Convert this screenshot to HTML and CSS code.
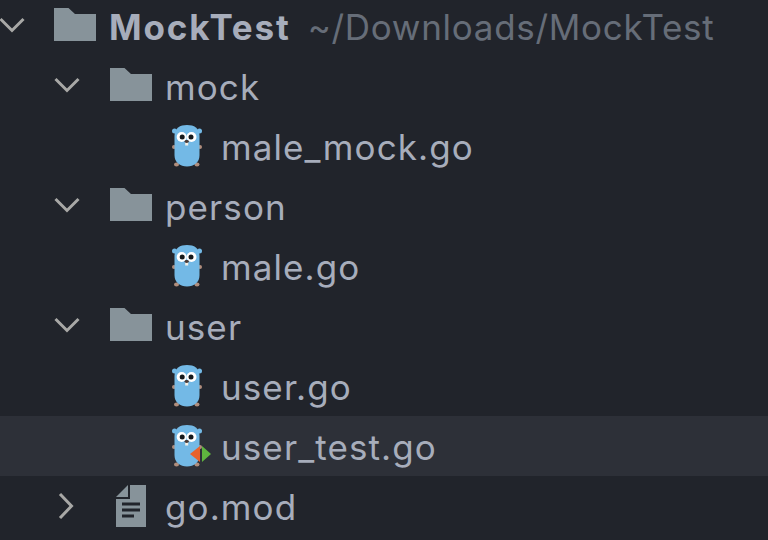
FILE: index.html
```html
<!DOCTYPE html>
<html lang="en">
<head>
  <meta charset="UTF-8">
  <title>Project tree</title>
  <link rel="stylesheet" href="styles.css">
</head>
<body>
<svg class="defs" width="0" height="0">
  <defs>
    <symbol id="folder" viewBox="0 0 42 33">
      <path d="M0 0H14.500L21 6H42V33H0Z" fill="#87939a"/>
    </symbol>
    <symbol id="chevron-down" viewBox="0 0 26 16">
      <path d="M1.500 2L13 13.500L24.500 2" fill="none" stroke="#a8a8a6" stroke-width="3"/>
    </symbol>
    <symbol id="chevron-right" viewBox="0 0 16 28">
      <path d="M2 2L13.500 14L2 26" fill="none" stroke="#a8a8a6" stroke-width="3"/>
    </symbol>
    <symbol id="gopher" viewBox="0 0 30 42">
      <ellipse cx="2" cy="22" rx="2" ry="2" fill="#b08d7c"/>
      <ellipse cx="28" cy="22" rx="2" ry="2" fill="#b08d7c"/>
      <ellipse cx="4.500" cy="39.500" rx="2.500" ry="2" fill="#b08d7c"/>
      <ellipse cx="25" cy="39.500" rx="2.500" ry="2" fill="#b08d7c"/>
      <circle cx="2.500" cy="6" r="2.500" fill="#73b9e6"/>
      <circle cx="27.500" cy="6" r="2.500" fill="#73b9e6"/>
      <path d="M2.500 11C2.500 3 8 0 15 0S27.500 3 27.500 11V30C27.500 37.500 22 41.500 15 41.500S2.500 37.500 2.500 30Z" fill="#73b9e6"/>
      <circle cx="9.700" cy="12" r="5" fill="#fff"/>
      <circle cx="19.500" cy="12" r="5" fill="#fff"/>
      <circle cx="10.200" cy="12" r="2.500" fill="#15191c"/>
      <circle cx="19" cy="12" r="2.500" fill="#15191c"/>
      <rect x="13.200" y="17" width="3" height="3.500" fill="#f4efe6"/>
      <ellipse cx="14.700" cy="16.500" rx="2.200" ry="1.400" fill="#4a3a36"/>
    </symbol>
    <symbol id="file" viewBox="0 0 30 42">
      <path d="M14 0H30V42H0V14H14Z" fill="#87939a"/>
      <path d="M12 0V12H0Z" fill="#87939a"/>
      <path d="M6 19H24M6 25H24M6 31H18" stroke="#21242b" stroke-width="3"/>
    </symbol>
  </defs>
</svg>

<ul class="tree">
  <li class="row level-0">
    <svg class="chevron"><use href="#chevron-down"/></svg>
    <svg class="icon folder"><use href="#folder"/></svg>
    <span class="name root">MockTest</span>
    <span class="path">~/Downloads/MockTest</span>
  </li>
  <li class="row level-1">
    <svg class="chevron"><use href="#chevron-down"/></svg>
    <svg class="icon folder"><use href="#folder"/></svg>
    <span class="name">mock</span>
  </li>
  <li class="row level-2">
    <span class="gopher-wrap"><svg class="gopher"><use href="#gopher"/></svg></span>
    <span class="name">male_mock.go</span>
  </li>
  <li class="row level-1">
    <svg class="chevron"><use href="#chevron-down"/></svg>
    <svg class="icon folder"><use href="#folder"/></svg>
    <span class="name">person</span>
  </li>
  <li class="row level-2">
    <span class="gopher-wrap"><svg class="gopher"><use href="#gopher"/></svg></span>
    <span class="name">male.go</span>
  </li>
  <li class="row level-1">
    <svg class="chevron"><use href="#chevron-down"/></svg>
    <svg class="icon folder"><use href="#folder"/></svg>
    <span class="name">user</span>
  </li>
  <li class="row level-2">
    <span class="gopher-wrap"><svg class="gopher"><use href="#gopher"/></svg></span>
    <span class="name">user.go</span>
  </li>
  <li class="row level-2 selected">
    <span class="gopher-wrap">
      <svg class="gopher"><use href="#gopher"/></svg>
      <svg class="run-badge" viewBox="0 0 21 16">
        <path d="M10 0V16L0 8Z" fill="#e8622c"/>
        <path d="M12 0L21 8L12 16Z" fill="#5fb53f"/>
      </svg>
    </span>
    <span class="name">user_test.go</span>
  </li>
  <li class="row level-1">
    <svg class="chevron closed"><use href="#chevron-right"/></svg>
    <svg class="icon file"><use href="#file"/></svg>
    <span class="name">go.mod</span>
  </li>
</ul>
</body>
</html>
```

FILE: styles.css
```css
:root {
  --background-color: #21242b;
  --selected-color: #2d3038;
  --text-color: #a7adbb;
  --path-color: #666d78;
}

html, body {
  height: 100%;
  overflow: hidden;
}

body {
  margin: 0;
  background-color: var(--background-color);
  color: var(--text-color);
  font-family: Inter, "Liberation Sans", sans-serif;
  font-size: 35px;
  letter-spacing: 1.100px;
}

.defs {
  display: block;
  height: 0;
}

.tree {
  list-style: none;
  margin: -4px 0 0;
  padding: 0;
}

.row {
  display: flex;
  align-items: center;
  height: 60px;
  white-space: nowrap;
}

.selected {
  background-color: var(--selected-color);
}

.level-0 {
  padding-left: 0;
}

.level-1 {
  padding-left: 54px;
}

.level-2 {
  padding-left: 172px;
}

.name, .path {
  padding-top: 2px;
}

.chevron {
  flex: none;
  width: 26px;
  height: 16px;
  margin-right: 30px;
  margin-bottom: 2px;
}

.level-0 .chevron {
  margin-left: -1px;
  margin-right: 29px;
}

.chevron.closed {
  width: 16px;
  height: 28px;
  margin-left: 4px;
  margin-right: 42px;
  margin-bottom: 0;
}

.folder {
  flex: none;
  width: 42px;
  height: 33px;
  margin-right: 13px;
  margin-bottom: 3px;
}

.file {
  flex: none;
  width: 30px;
  height: 42px;
  margin-right: 19px;
}

.gopher-wrap {
  position: relative;
  flex: none;
  width: 30px;
  height: 42px;
  margin-right: 19px;
}

.gopher {
  display: block;
  width: 30px;
  height: 42px;
}

.run-badge {
  position: absolute;
  left: 18px;
  top: 21px;
  width: 21px;
  height: 16px;
}

.root {
  font-weight: 700;
  letter-spacing: 1.850px;
}

.path {
  margin-left: 17px;
  color: var(--path-color);
  letter-spacing: 0.700px;
}
```
